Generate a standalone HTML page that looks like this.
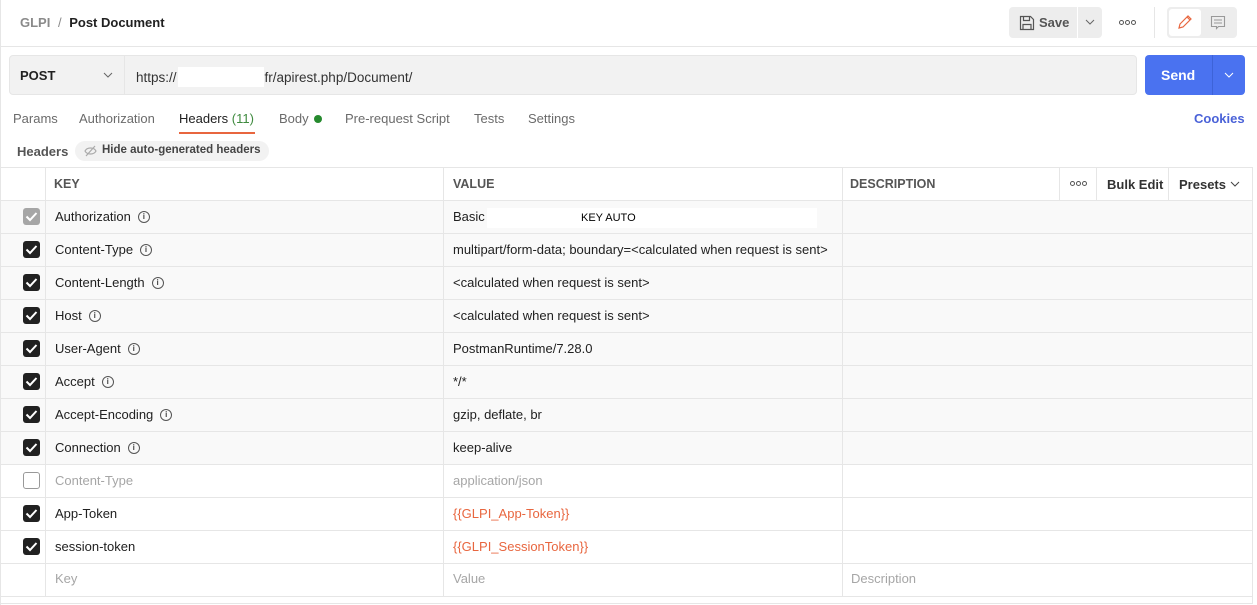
<!DOCTYPE html>
<html><head><meta charset="utf-8"><style>
*{box-sizing:border-box;margin:0;padding:0}
body{width:1257px;height:605px;background:#fff;font-family:"Liberation Sans",sans-serif;font-size:13px;color:#212121;position:relative;overflow:hidden}
.a{position:absolute;white-space:nowrap}
.hl{position:absolute;height:1px;background:#e6e6e6}
.vl{position:absolute;width:1px;background:#e6e6e6}
.cb{position:absolute;left:23px;width:17px;height:17px;border-radius:3px;background:#212121}
.cb svg{position:absolute;left:2px;top:3px}
.info{display:inline-block;width:12px;height:12px;border:1px solid #555;border-radius:50%;font-size:8px;text-align:center;line-height:10px;margin-left:7px;vertical-align:2px;color:#444;font-weight:bold}
.gray{color:#a6a6a6}
.or{color:#e8663f}
.dots{display:flex;gap:1px}
.dots i{display:block;width:5px;height:5px;border:1px solid #555;border-radius:50%}
</style></head><body>
<div class="a" style="left:20px;top:15px;font-size:13px;color:#8a8a8a;font-weight:bold">GLPI <span style="margin:0 4px;font-weight:normal">/</span> <span style="color:#212121">Post Document</span></div>
<div class="a" style="left:1009px;top:7px;width:68px;height:31px;background:#ededed;border-radius:4px 0 0 4px"></div>
<div class="a" style="left:1078px;top:7px;width:24px;height:31px;background:#ededed;border-radius:0 4px 4px 0"></div>
<svg class="a" style="left:1019px;top:15px" width="16" height="16" viewBox="0 0 16 16" fill="none" stroke="#555" stroke-width="1.2"><path d="M1.5 1.5h10l3 3v10h-13z"/><path d="M4.5 1.5v4h6v-4M4 14.5v-5h8v5"/></svg>
<div class="a" style="left:1039px;top:15px;color:#555;font-size:13px;font-weight:bold">Save</div>
<svg class="a" style="left:1085px;top:19px" width="10" height="6"><path d="M1 1l4 4 4-4" stroke="#666" fill="none"/></svg>
<div class="a dots" style="left:1119px;top:20px"><i></i><i></i><i></i></div>
<div class="vl" style="left:1154px;top:7px;height:31px"></div>
<div class="a" style="left:1167px;top:7px;width:70px;height:31px;background:#ededed;border-radius:4px"></div>
<div class="a" style="left:1169px;top:9px;width:32px;height:27px;background:#fff;border-radius:3px"></div>
<svg class="a" style="left:1177px;top:14px" width="16" height="16" viewBox="0 0 16 16" fill="none" stroke="#e8663f" stroke-width="1.2"><path d="M2 14l1-4 8-8 3 3-8 8z M10 3l3 3"/></svg>
<svg class="a" style="left:1210px;top:15px" width="16" height="16" viewBox="0 0 16 16" fill="none" stroke="#999" stroke-width="1.1"><path d="M1.5 1.5h13v10h-6l-2 2v-2h-5z M4 5h8M4 8h8"/></svg>
<div class="hl" style="left:0;top:46px;width:1257px"></div>
<div class="vl" style="left:0;top:0;height:605px"></div>
<div class="a" style="left:9px;top:55px;width:1128px;height:40px;background:#f2f2f2;border:1px solid #e6e6e6;border-radius:4px"></div>
<div class="vl" style="left:124px;top:56px;height:38px"></div>
<div class="a" style="left:20px;top:68px;font-weight:bold;font-size:13px">POST</div>
<svg class="a" style="left:103px;top:72px" width="10" height="6"><path d="M1 1l4 4 4-4" stroke="#666" fill="none"/></svg>
<div class="a" style="left:136px;top:67px;font-size:13.5px;color:#333">https://<span style="display:inline-block;width:86px;height:20px;background:#fff;vertical-align:-5px;margin:0 1px 0 1px"></span>fr/apirest.php/Document/</div>
<div class="a" style="left:1145px;top:55px;width:100px;height:40px;background:#4a72f0;border-radius:4px"></div>
<div class="vl" style="left:1212px;top:55px;height:40px;background:#3d63d8"></div>
<div class="a" style="left:1161px;top:67px;color:#fff;font-weight:bold;font-size:14px">Send</div>
<svg class="a" style="left:1224px;top:72px" width="10" height="6"><path d="M1 1l4 4 4-4" stroke="#fff" fill="none"/></svg>
<div class="a" style="left:13px;top:111px;color:#6b6b6b">Params</div>
<div class="a" style="left:79px;top:111px;color:#6b6b6b">Authorization</div>
<div class="a" style="left:179px;top:111px;color:#212121">Headers <span style="color:#3e8a3e">(11)</span></div>
<div class="a" style="left:179px;top:132px;width:76px;height:2px;background:#e8663f"></div>
<div class="a" style="left:279px;top:111px;color:#6b6b6b">Body <span style="display:inline-block;width:8px;height:8px;border-radius:50%;background:#268a2e;margin-left:2px"></span></div>
<div class="a" style="left:345px;top:111px;color:#6b6b6b">Pre-request Script</div>
<div class="a" style="left:474px;top:111px;color:#6b6b6b">Tests</div>
<div class="a" style="left:528px;top:111px;color:#6b6b6b">Settings</div>
<div class="a" style="left:1194px;top:111px;color:#4a62d8;font-weight:bold">Cookies</div>
<div class="a" style="left:17px;top:144px;color:#555;font-weight:bold">Headers</div>
<div class="a" style="left:75px;top:141px;width:194px;height:20px;background:#f2f2f2;border-radius:10px"></div>
<svg class="a" style="left:84px;top:145px" width="13" height="12" viewBox="0 0 13 12" fill="none" stroke="#aaa" stroke-width="1.2"><path d="M1 6c2-4 9-4 11 0-2 4-9 4-11 0zM2 11L11 1"/></svg>
<div class="a" style="left:102px;top:144px;font-size:11.5px;color:#444;font-weight:bold">Hide auto-generated headers</div>
<div class="a" style="left:1px;top:200px;width:1251px;height:264px;background:#f9f9f9"></div>
<div class="hl" style="left:0;top:167px;width:1253px"></div>
<div class="hl" style="left:0;top:200px;width:1253px"></div>
<div class="hl" style="left:0;top:233px;width:1253px"></div>
<div class="hl" style="left:0;top:266px;width:1253px"></div>
<div class="hl" style="left:0;top:299px;width:1253px"></div>
<div class="hl" style="left:0;top:332px;width:1253px"></div>
<div class="hl" style="left:0;top:365px;width:1253px"></div>
<div class="hl" style="left:0;top:398px;width:1253px"></div>
<div class="hl" style="left:0;top:431px;width:1253px"></div>
<div class="hl" style="left:0;top:464px;width:1253px"></div>
<div class="hl" style="left:0;top:497px;width:1253px"></div>
<div class="hl" style="left:0;top:530px;width:1253px"></div>
<div class="hl" style="left:0;top:563px;width:1253px"></div>
<div class="hl" style="left:0;top:596px;width:1253px"></div>
<div class="hl" style="left:0;top:603px;width:1253px"></div>
<div class="vl" style="left:45px;top:167px;height:430px"></div>
<div class="vl" style="left:443px;top:167px;height:430px"></div>
<div class="vl" style="left:842px;top:167px;height:430px"></div>
<div class="vl" style="left:1252px;top:167px;height:437px"></div>
<div class="vl" style="left:1059px;top:167px;height:33px"></div>
<div class="vl" style="left:1096px;top:167px;height:33px"></div>
<div class="vl" style="left:1168px;top:167px;height:33px"></div>
<div class="a" style="left:54px;top:177px;font-weight:bold;color:#555;font-size:12.5px">KEY</div>
<div class="a" style="left:453px;top:177px;font-weight:bold;color:#555;font-size:12.5px">VALUE</div>
<div class="a" style="left:850px;top:177px;font-weight:bold;color:#555;font-size:12.5px">DESCRIPTION</div>
<div class="a dots" style="left:1070px;top:181px"><i></i><i></i><i></i></div>
<div class="a" style="left:1107px;top:177px;font-weight:bold;color:#333">Bulk Edit</div>
<div class="a" style="left:1179px;top:177px;font-weight:bold;color:#333">Presets</div>
<svg class="a" style="left:1230px;top:181px" width="10" height="6"><path d="M1 1l4 4 4-4" stroke="#444" fill="none"/></svg>

<div class="cb" style="top:208px;background:#a6a6a6"><svg width="13" height="11"><path d="M1.5 5.5l3.5 3.5 6.5-7" stroke="#fff" stroke-width="2" fill="none"/></svg></div>
<div class="a" style="left:55px;top:209px">Authorization<span class="info">i</span></div>
<div class="a" style="left:453px;top:209px">Basic</div>
<div class="a" style="left:487px;top:208px;width:330px;height:20px;background:#fff"></div>
<div class="a" style="left:581px;top:212px;font-size:11px;color:#000">KEY AUTO</div>

<div class="cb" style="top:241px"><svg width="13" height="11"><path d="M1.5 5.5l3.5 3.5 6.5-7" stroke="#fff" stroke-width="2" fill="none"/></svg></div>
<div class="a" style="left:55px;top:242px">Content-Type<span class="info">i</span></div>
<div class="a" style="left:453px;top:242px">multipart/form-data; boundary=&lt;calculated when request is sent&gt;</div>

<div class="cb" style="top:274px"><svg width="13" height="11"><path d="M1.5 5.5l3.5 3.5 6.5-7" stroke="#fff" stroke-width="2" fill="none"/></svg></div>
<div class="a" style="left:55px;top:275px">Content-Length<span class="info">i</span></div>
<div class="a" style="left:453px;top:275px">&lt;calculated when request is sent&gt;</div>

<div class="cb" style="top:307px"><svg width="13" height="11"><path d="M1.5 5.5l3.5 3.5 6.5-7" stroke="#fff" stroke-width="2" fill="none"/></svg></div>
<div class="a" style="left:55px;top:308px">Host<span class="info">i</span></div>
<div class="a" style="left:453px;top:308px">&lt;calculated when request is sent&gt;</div>

<div class="cb" style="top:340px"><svg width="13" height="11"><path d="M1.5 5.5l3.5 3.5 6.5-7" stroke="#fff" stroke-width="2" fill="none"/></svg></div>
<div class="a" style="left:55px;top:341px">User-Agent<span class="info">i</span></div>
<div class="a" style="left:453px;top:341px">PostmanRuntime/7.28.0</div>

<div class="cb" style="top:373px"><svg width="13" height="11"><path d="M1.5 5.5l3.5 3.5 6.5-7" stroke="#fff" stroke-width="2" fill="none"/></svg></div>
<div class="a" style="left:55px;top:374px">Accept<span class="info">i</span></div>
<div class="a" style="left:453px;top:374px">*/*</div>

<div class="cb" style="top:406px"><svg width="13" height="11"><path d="M1.5 5.5l3.5 3.5 6.5-7" stroke="#fff" stroke-width="2" fill="none"/></svg></div>
<div class="a" style="left:55px;top:407px">Accept-Encoding<span class="info">i</span></div>
<div class="a" style="left:453px;top:407px">gzip, deflate, br</div>

<div class="cb" style="top:439px"><svg width="13" height="11"><path d="M1.5 5.5l3.5 3.5 6.5-7" stroke="#fff" stroke-width="2" fill="none"/></svg></div>
<div class="a" style="left:55px;top:440px">Connection<span class="info">i</span></div>
<div class="a" style="left:453px;top:440px">keep-alive</div>

<div class="cb" style="top:472px;background:#fff;border:1px solid #999"></div>
<div class="a gray" style="left:55px;top:473px">Content-Type</div>
<div class="a gray" style="left:453px;top:473px">application/json</div>

<div class="cb" style="top:505px"><svg width="13" height="11"><path d="M1.5 5.5l3.5 3.5 6.5-7" stroke="#fff" stroke-width="2" fill="none"/></svg></div>
<div class="a" style="left:55px;top:506px">App-Token</div>
<div class="a or" style="left:453px;top:506px">{{GLPI_App-Token}}</div>

<div class="cb" style="top:538px"><svg width="13" height="11"><path d="M1.5 5.5l3.5 3.5 6.5-7" stroke="#fff" stroke-width="2" fill="none"/></svg></div>
<div class="a" style="left:55px;top:539px">session-token</div>
<div class="a or" style="left:453px;top:539px">{{GLPI_SessionToken}}</div>

<div class="a gray" style="left:55px;top:571px">Key</div>
<div class="a gray" style="left:453px;top:571px">Value</div>
<div class="a gray" style="left:851px;top:571px">Description</div>
</body></html>
